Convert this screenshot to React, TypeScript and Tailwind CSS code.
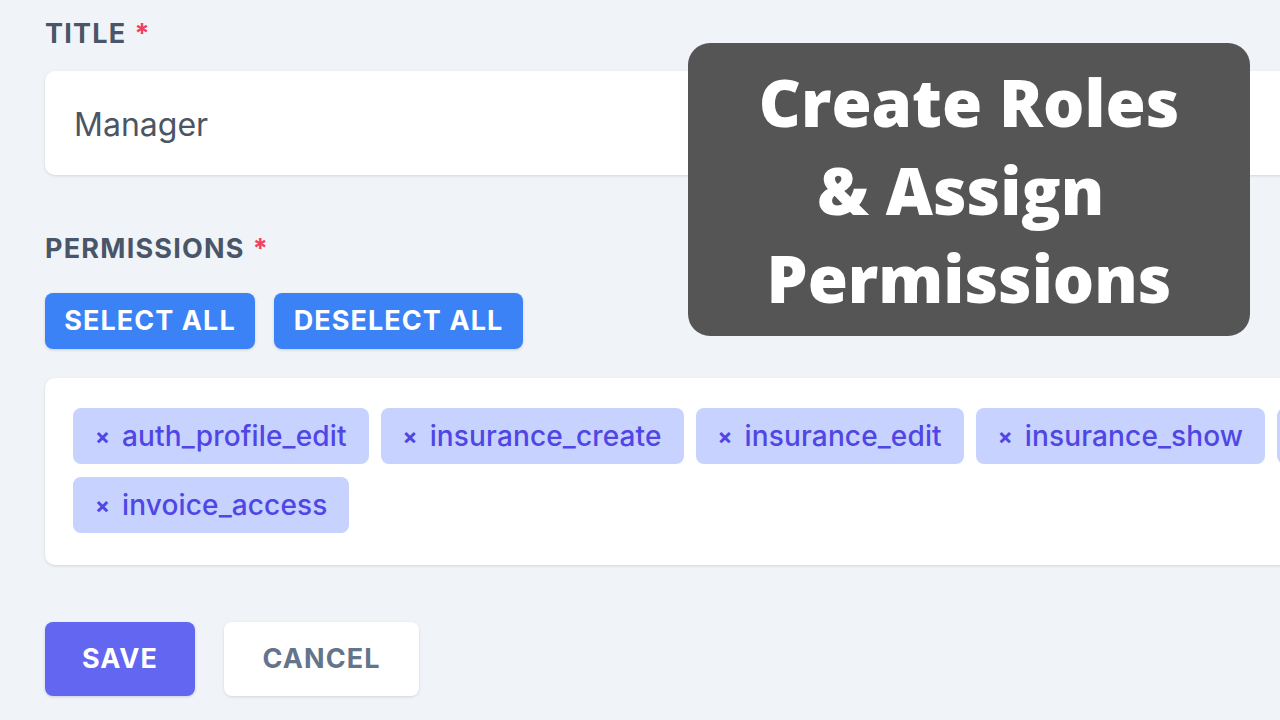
import React from 'react';

const permissions = [
  'auth_profile_edit',
  'insurance_create',
  'insurance_edit',
  'insurance_show',
  'insurance_delete',
  'invoice_access',
];

const Label = ({ text }: { text: string }) => (
  <div className="flex items-center gap-[8px] text-[27px] leading-[32px] font-bold uppercase tracking-[0.045em] text-[#4a5568]">
    <span>{text}</span>
    <span className="text-[#f43f5e]">*</span>
  </div>
);

const App = () => {
  return (
    <div
      className="relative w-[1280px] h-[720px] overflow-hidden bg-[#f0f3f8]"
      style={{ fontFamily: 'Inter, "Noto Sans", sans-serif' }}
    >
      <div className="pl-[45px] pt-[18px] w-[1700px]">
        <Label text="Title" />

        {/* title input */}
        <div className="mt-[21px] h-[104px] w-[1400px] rounded-[10px] bg-white shadow-[0_1px_3px_rgba(0,0,0,0.12)] flex items-center pl-[29px] pt-[3px] text-[32px] text-[#4b5563]">
          Manager
        </div>

        <div className="mt-[58px]">
          <Label text="Permissions" />
        </div>

        <div className="mt-[28px] flex gap-[19px]">
          <button className="h-[56px] w-[210px] rounded-[8px] bg-[#3b82f6] text-white text-[27px] font-bold uppercase tracking-[0.04em] shadow-[0_1px_3px_rgba(0,0,0,0.15)]">
            Select All
          </button>
          <button className="h-[56px] w-[249px] rounded-[8px] bg-[#3b82f6] text-white text-[27px] font-bold uppercase tracking-[0.04em] shadow-[0_1px_3px_rgba(0,0,0,0.15)]">
            Deselect All
          </button>
        </div>

        {/* selected permissions */}
        <div className="mt-[29px] w-[1600px] rounded-[10px] bg-white shadow-[0_1px_3px_rgba(0,0,0,0.12)] px-[28px] pt-[30px] pb-[32px] flex flex-wrap gap-x-[12px] gap-y-[13px]">
          {permissions.map((p) => (
            <div
              key={p}
              className="h-[56px] rounded-[8px] bg-[#c7d2fe] px-[22px] flex items-center gap-[12px] text-[28px] font-medium tracking-[0.005em] text-[#4f46e5]"
            >
              <span className="font-bold text-[22px]">×</span>
              <span>{p}</span>
            </div>
          ))}
        </div>

        <div className="mt-[57px] flex gap-[29px]">
          <button className="h-[74px] w-[150px] rounded-[8px] bg-[#6366f1] text-white text-[27px] font-bold uppercase tracking-[0.04em] shadow-[0_1px_3px_rgba(0,0,0,0.15)]">
            Save
          </button>
          <button className="h-[74px] w-[195px] rounded-[8px] bg-white text-[#64748b] text-[27px] font-bold uppercase tracking-[0.04em] shadow-[0_1px_3px_rgba(0,0,0,0.12)]">
            Cancel
          </button>
        </div>
      </div>

      {/* overlay caption */}
      <div
        className="absolute left-[688px] top-[43px] w-[562px] h-[293px] rounded-[22px] bg-[#555555] flex flex-col items-center justify-center text-white text-[65px] font-extrabold leading-[88px] text-center"
        style={{ fontFamily: '"Open Sans", sans-serif' }}
      >
        <span>Create Roles</span>
        <span>&amp; Assign&nbsp;</span>
        <span>Permissions</span>
      </div>
    </div>
  );
};

export default App;
